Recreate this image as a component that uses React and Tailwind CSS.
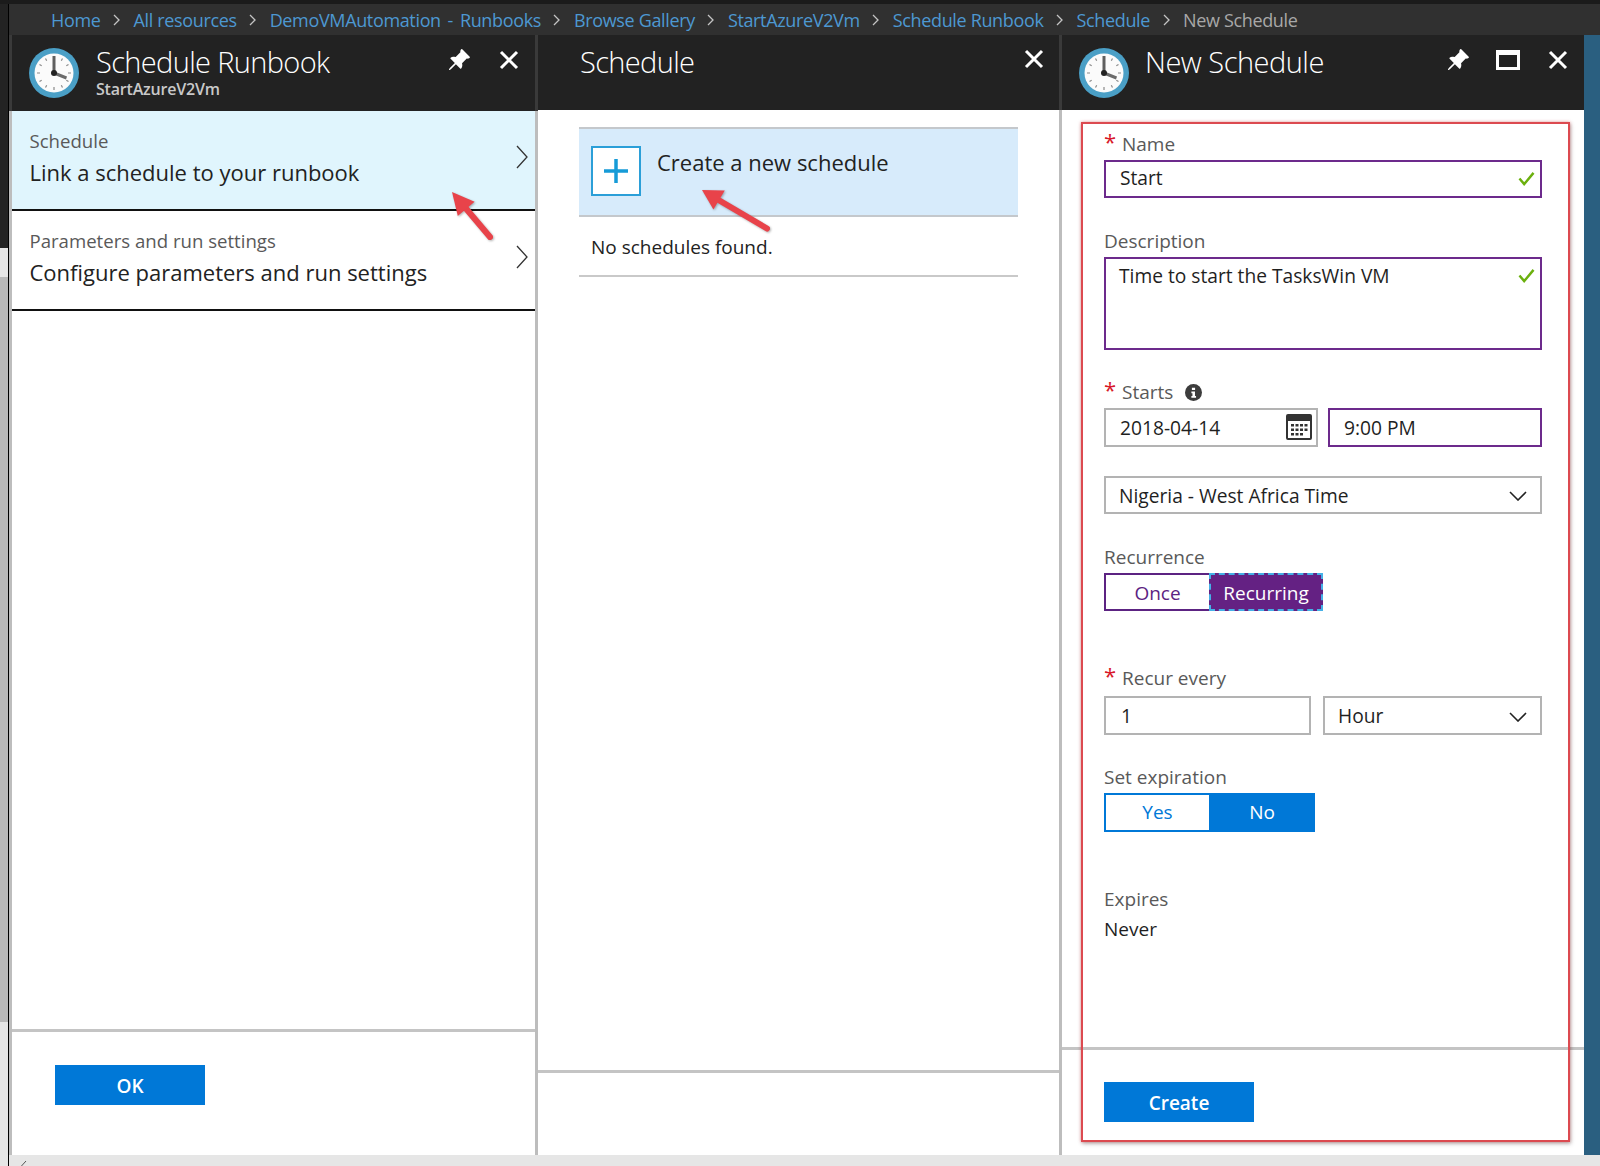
import { BsPinAngleFill } from "react-icons/bs";

const crumbs = [
  "Home",
  "All resources",
  "DemoVMAutomation - Runbooks",
  "Browse Gallery",
  "StartAzureV2Vm",
  "Schedule Runbook",
  "Schedule",
];

function ClockIcon() {
  return (
    <svg viewBox="0 0 50 50" className="w-[50px] h-[50px] shrink-0 -mt-[2px]">
      <circle cx="25" cy="25" r="25" fill="#4a9fc6" />
      <circle cx="25" cy="25" r="19.5" fill="#fbfbfb" />
      <g stroke="#8a8a8a" strokeWidth="1.2">
        <path d="M25 8v3M25 39v3M8 25h3M39 25h3M16.5 10.5l1.2 2.2M33.5 10.5l-1.2 2.2M10.5 16.5l2.2 1.2M39.5 16.5l-2.2 1.2M10.5 33.5l2.2-1.2M39.5 33.5l-2.2-1.2M16.5 39.5l1.2-2.2M33.5 39.5l-1.2-2.2" />
      </g>
      <path d="M25 25V8" stroke="#5f5f5f" strokeWidth="3" />
      <path d="M25 25l12.5 5" stroke="#6b6b6b" strokeWidth="3" />
      <circle cx="25" cy="25" r="3" fill="#222" />
    </svg>
  );
}

function CloseIcon() {
  return (
    <svg viewBox="0 0 20 20" className="w-5 h-5 text-white">
      <path d="M2 2l16 16M18 2L2 18" stroke="currentColor" strokeWidth="3" />
    </svg>
  );
}

function Chevron() {
  return (
    <svg viewBox="0 0 12 24" className="w-3 h-6 text-[#333] mb-[2px]">
      <path d="M1 1l10 11L1 23" fill="none" stroke="currentColor" strokeWidth="1.3" />
    </svg>
  );
}

function CaretDown() {
  return (
    <svg viewBox="0 0 18 10" className="w-[18px] h-[10px] text-[#222]">
      <path d="M1 1l8 8 8-8" fill="none" stroke="currentColor" strokeWidth="1.6" />
    </svg>
  );
}

function Check() {
  return (
    <svg viewBox="0 0 18 16" className="w-[17px] h-[15px] text-[#6bb00e]">
      <path d="M1.5 8l5 6L16.5 2" fill="none" stroke="currentColor" strokeWidth="2.6" />
    </svg>
  );
}

function Arrow({ className, viewBox, head, shaft }) {
  return (
    <svg viewBox={viewBox} className={`overflow-visible drop-shadow-[1px_1px_1px_rgba(0,0,0,0.3)] ${className}`}>
      <path d={shaft} stroke="#e8434a" strokeWidth="6" strokeLinecap="round" />
      <path d={head} fill="#e8434a" />
    </svg>
  );
}

function Label({ required, children }) {
  return (
    <div className="flex items-start text-[19px] leading-[26px] text-[#595959]">
      {required && <span className="w-[18px] text-[#d8182a] text-[22px] leading-[20px]">*</span>}
      {children}
    </div>
  );
}

function Field({ className = "", children, purple }) {
  return (
    <div
      className={`flex items-center justify-between h-[38px] border-2 pt-[2px] text-[19.2px] text-[#1f1f1f] ${
        purple ? "border-[#6c2a8c]" : "border-[#b3b3b3]"
      } ${className}`}
    >
      {children}
    </div>
  );
}

export default function App() {
  return (
    <div className="w-[1600px] h-[1166px] overflow-hidden flex flex-col bg-[#e6e6e6] font-['Open_Sans',sans-serif]">
      <div className="h-[4px] bg-[#1b1b1b]" />
      <div className="flex-1 flex min-h-0">
        {/* left edge of the portal, with its scrollbar */}
        <div className="w-[9px] flex flex-col border-r border-black">
          <div className="h-[244px] bg-[#232323]" />
          <div className="h-[29px] bg-[#e6e6e6]" />
          <div className="h-[745px] bg-[#b9b9b9]" />
          <div className="flex-1 bg-[#e6e6e6]" />
        </div>

        <div className="flex-1 flex flex-col min-w-0">
          <div className="h-[31px] bg-[#303030] flex items-center pl-[42px] pt-[1px] text-[18px] tracking-[-0.35px]">
            {crumbs.map((c) => (
              <span key={c} className="flex items-center">
                <span className={`text-[#4d98d2] ${c === crumbs[2] ? "[word-spacing:2.5px]" : ""}`}>{c}</span>
                <svg viewBox="0 0 8 12" className="w-2 h-3 mx-[12.5px] text-[#c4c4c4]">
                  <path d="M1 1l5 5-5 5" fill="none" stroke="currentColor" strokeWidth="1.3" />
                </svg>
              </span>
            ))}
            <span className="text-[#a8a8a8]">New Schedule</span>
          </div>

          <div className="flex-1 flex min-h-0">
            {/* Schedule Runbook blade */}
            <div className="w-[529px] flex flex-col relative">
              <div className="h-[76px] bg-[#222] border-x-[3px] border-[#3a3a3a] flex items-center pl-[17px] pr-[16px] pt-[2px]">
                <ClockIcon />
                <div className="ml-[17px] flex-1 -mt-[6px]">
                  <div className="text-[29px] leading-[36px] font-light tracking-[-0.65px] text-white">Schedule Runbook</div>
                  <div className="text-[16px] leading-[18px] font-semibold text-[#c9c9c9] tracking-[-0.2px]">StartAzureV2Vm</div>
                </div>
                <div className="flex items-center gap-[28px] -mt-[28px]">
                  <BsPinAngleFill className="w-[24px] h-[24px] text-white" />
                  <CloseIcon />
                </div>
              </div>
              <div className="flex-1 border-x-[3px] border-[#bdbdbd] bg-white flex flex-col">
                <div className="h-[100px] bg-[#e0f5fd] border-b-2 border-[#111] flex items-center justify-between pl-[17.5px] pr-[7px] pt-[1px] pb-[6px]">
                  <div>
                    <div className="text-[18.6px] leading-[28px] text-[#595959]">Schedule</div>
                    <div className="text-[22px] leading-[34px] text-[#222]">Link a schedule to your runbook</div>
                  </div>
                  <Chevron />
                </div>
                <div className="h-[100px] border-b-2 border-[#111] flex items-center justify-between pl-[17.5px] pr-[7px] pb-[5px]">
                  <div>
                    <div className="text-[18.6px] leading-[28px] text-[#595959]">Parameters and run settings</div>
                    <div className="text-[22px] leading-[34px] text-[#222]">Configure parameters and run settings</div>
                  </div>
                  <Chevron />
                </div>
                <div className="flex-1" />
                <div className="h-[126px] border-t-[3px] border-[#c4c4c4] pl-[43px] pt-[33px]">
                  <div className="w-[150px] h-[40px] pt-[2px] bg-[#0078d7] text-white text-[19px] font-semibold flex items-center justify-center">OK</div>
                </div>
              </div>
              <Arrow
                className="absolute left-[443px] top-[157px] w-[42px] h-[48px]"
                viewBox="0 0 42 48"
                head="M0 0L22.6 9.7 5.8 23.9z"
                shaft="M11 13L38 45"
              />
            </div>

            {/* Schedule blade */}
            <div className="w-[524px] flex flex-col relative">
              <div className="h-[75px] bg-[#222] border-r-[3px] border-[#3a3a3a] flex items-start pl-[42px] pr-[15px] pt-[9px]">
                <div className="flex-1 text-[29px] leading-[36px] font-light tracking-[-0.65px] text-white">Schedule</div>
                <div className="mt-[5px]">
                  <CloseIcon />
                </div>
              </div>
              <div className="flex-1 border-r-[3px] border-[#bdbdbd] bg-white flex flex-col">
                <div className="mx-[41px] mt-[17px]">
                  <div className="h-[90px] bg-[#d7ebfb] border-y-2 border-[#c4c8cc] flex items-start pl-[12px] pt-[17px]">
                    <div className="w-[50px] h-[50px] bg-white border-2 border-[#2b9fd8] flex items-center justify-center">
                      <svg viewBox="0 0 24 24" className="w-[24px] h-[24px] text-[#169bd7]">
                        <path d="M12 0v24M0 12h24" stroke="currentColor" strokeWidth="3.5" />
                      </svg>
                    </div>
                    <div className="ml-[16px] mt-[-2px] text-[22px] leading-[36px] text-[#222]">Create a new schedule</div>
                  </div>
                  <div className="h-[60px] border-b-2 border-[#c9c9c9] pl-[12px] pt-[16px] text-[19px] leading-[28px] text-[#222]">
                    No schedules found.
                  </div>
                </div>
                <div className="flex-1" />
                <div className="h-[85px] border-t-[3px] border-[#c4c4c4]" />
              </div>
              <Arrow
                className="absolute left-[164px] top-[155px] w-[68px] h-[42px]"
                viewBox="0 0 68 42"
                head="M0 0L22.8 0.5 11.4 19.5z"
                shaft="M14 8.5L65 38.5"
              />
            </div>

            {/* New Schedule blade */}
            <div className="flex-1 flex flex-col relative">
              <div className="h-[75px] bg-[#222] flex items-center pl-[17px] pr-[16px] pt-[2px]">
                <ClockIcon />
                <div className="ml-[16px] flex-1 -mt-[24px] text-[29px] leading-[36px] font-light tracking-[-0.5px] text-white">New Schedule</div>
                <div className="flex items-center gap-[28px] -mt-[28px]">
                  <BsPinAngleFill className="w-[24px] h-[24px] text-white -mr-[2px]" />
                  <svg viewBox="0 0 24 20" className="w-[24px] h-[20px] text-white">
                    <path d="M1.5 1.5h21v17h-21z" fill="none" stroke="currentColor" strokeWidth="3" />
                    <path d="M1 3h22" stroke="currentColor" strokeWidth="4" />
                  </svg>
                  <CloseIcon />
                </div>
              </div>
              <div className="flex-1 bg-white flex flex-col">
                <div className="flex-1 pl-[42px] pr-[42px] pt-[21px]">
                  <Label required>Name</Label>
                  <Field purple className="mt-[3px] pl-[14px] pr-[5px] pb-[4px]">
                    Start
                    <Check />
                  </Field>

                  <div className="mt-[30px]">
                    <Label>Description</Label>
                  </div>
                  <div className="mt-[3px] h-[93px] border-2 border-[#6c2a8c] flex items-start justify-between pl-[13px] pr-[5px] pt-[3px] text-[19.2px] leading-[28px] text-[#1f1f1f]">
                    Time to start the TasksWin VM
                    <span className="mt-[6px]">
                      <Check />
                    </span>
                  </div>

                  <div className="mt-[29px] flex items-center">
                    <Label required>Starts</Label>
                    <svg viewBox="0 0 16 16" className="ml-[12px] w-[17px] h-[17px] text-[#3c3c3c]">
                      <circle cx="8" cy="8" r="8" fill="currentColor" />
                      <path d="M6.5 3.5h3v2.2h-3zM6 7h3.4v4.2h1V13H6v-1.8h1V8.6H6z" fill="#fff" />
                    </svg>
                  </div>
                  <div className="mt-[3px] flex gap-[10px]">
                    <Field className="w-[214px] pl-[14px] pr-[4px] h-[39px]">
                      2018-04-14
                      <svg viewBox="0 0 26 26" className="w-[26px] h-[26px] text-[#333] -mt-[4px]">
                        <rect x="1" y="1" width="24" height="24" rx="1" fill="none" stroke="currentColor" strokeWidth="2" />
                        <path d="M1 1h24v6H1z" fill="currentColor" />
                        <path
                          d="M5 10h3v2.5H5zM9.5 10h3v2.5h-3zM14 10h3v2.5h-3zM18.5 10h3v2.5h-3zM5 14.5h3V17H5zM9.5 14.5h3V17h-3zM14 14.5h3V17h-3zM18.5 14.5h3V17h-3zM5 19h3v2.5H5zM9.5 19h3v2.5h-3zM14 19h3v2.5h-3z"
                          fill="currentColor"
                        />
                      </svg>
                    </Field>
                    <Field purple className="flex-1 pl-[14px] h-[39px]">
                      9:00 PM
                    </Field>
                  </div>

                  <Field className="mt-[29px] pl-[13px] pr-[13px]">
                    Nigeria - West Africa Time
                    <CaretDown />
                  </Field>

                  <div className="mt-[30px]">
                    <Label>Recurrence</Label>
                  </div>
                  <div className="mt-[3px] flex h-[38px] w-[219px] text-[19px]">
                    <div className="w-[105px] border-2 border-r-0 border-[#5c2382] text-[#5c2382] flex items-center justify-center pt-[2px]">Once</div>
                    <div className="flex-1 bg-[#642183] border-2 border-dashed border-[#45b0e6] text-white flex items-center justify-center pt-[2px]">Recurring</div>
                  </div>

                  <div className="mt-[54px]">
                    <Label required>Recur every</Label>
                  </div>
                  <div className="mt-[5px] flex gap-[12px]">
                    <Field className="w-[207px] pl-[15px] h-[39px]">1</Field>
                    <Field className="flex-1 pl-[13px] pr-[13px] h-[39px]">
                      Hour
                      <CaretDown />
                    </Field>
                  </div>

                  <div className="mt-[29px]">
                    <Label>Set expiration</Label>
                  </div>
                  <div className="mt-[3px] flex h-[39px] w-[211px] text-[19px]">
                    <div className="w-[105px] border-2 border-r-0 border-[#0078d7] text-[#0078d7] flex items-center justify-center">Yes</div>
                    <div className="flex-1 bg-[#0078d7] text-white flex items-center justify-center">No</div>
                  </div>

                  <div className="mt-[54px]">
                    <Label>Expires</Label>
                  </div>
                  <div className="mt-[4px] text-[19px] leading-[26px] text-[#1f1f1f]">Never</div>
                </div>
                <div className="h-[108px] border-t-[3px] border-[#c4c4c4] pl-[42px] pt-[32px]">
                  <div className="w-[150px] h-[40px] pt-[2px] bg-[#0078d7] text-white text-[19px] font-semibold flex items-center justify-center">Create</div>
                </div>
              </div>
              {/* red annotation round the form */}
              <div className="absolute left-[19px] top-[87px] w-[489px] h-[1020px] border-[2.5px] border-[#dc4a50] shadow-[1px_2px_4px_rgba(0,0,0,0.25),0_0_3px_rgba(224,70,76,0.5)] pointer-events-none" />
            </div>

            <div className="w-[16px] bg-[#2a5f80]" />
          </div>

          <div className="h-[11px] bg-[#e6e6e6] pl-[12px] pt-[6px]">
            <svg viewBox="0 0 6 6" className="w-[6px] h-[6px] text-[#555]">
              <path d="M5 0L0 5.5" fill="none" stroke="currentColor" strokeWidth="1" />
            </svg>
          </div>
        </div>
      </div>
    </div>
  );
}
